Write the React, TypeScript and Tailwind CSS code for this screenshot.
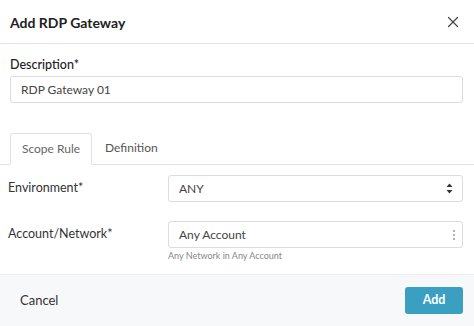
import { X } from 'lucide-react'

export default function App() {
  return (
    <div className="w-[474px] h-[326px] bg-white flex flex-col font-['Lato',sans-serif] text-[#333]">
      {/* Header */}
      <div className="h-[44px] border-b border-[#e5e5e5] flex items-center justify-between pl-[10px] pr-[12px] shrink-0">
        <h2 className="text-[14px] font-bold text-[#222] pt-[1px]">Add RDP Gateway</h2>
        <X size={18} strokeWidth={1.6} className="text-[#444]" />
      </div>

      {/* Body */}
      <div className="flex-1 flex flex-col">
        <div className="pl-[10px] pr-[11px] pt-[13px]">
          <label className="block text-[12.5px] font-medium text-[#222] leading-[15px]">Description*</label>
          <div className="mt-[4px] h-[27px] border border-[#dcdcdc] rounded-[3px] flex items-center px-[10px] text-[12px] text-[#444]">
            RDP Gateway 01
          </div>
        </div>

        {/* Tabs */}
        <div className="mt-[30px] flex items-end border-b border-[#e2e2e2] pl-[10px] h-[32px]">
          <div className="h-[32px] w-[82px] border border-[#e2e2e2] border-b-white -mb-px rounded-t-[3px] bg-white flex items-center justify-center text-[12px] text-[#666]">
            Scope Rule
          </div>
          <div className="h-[32px] px-[13px] flex items-center text-[12px] text-[#555]">Definition</div>
        </div>

        <div className="pl-[8px] pr-[11px] pt-[10px] flex flex-col">
          <div className="flex items-center h-[27px]">
            <span className="w-[160px] text-[12.5px] text-[#333]">Environment*</span>
            <div className="flex-1 h-[27px] border border-[#dcdcdc] rounded-[3px] flex items-center justify-between pl-[10px] pr-[9px] text-[12px] text-[#444]">
              ANY
              <svg width="7" height="11" viewBox="0 0 7 11" className="text-[#333]">
                <path d="M3.5 0.5 L6.5 4 H0.5 Z" fill="currentColor" />
                <path d="M3.5 10.5 L6.5 7 H0.5 Z" fill="currentColor" />
              </svg>
            </div>
          </div>

          <div className="flex items-start mt-[19px]">
            <span className="w-[160px] h-[27px] flex items-center text-[12.5px] text-[#333]">Account/Network*</span>
            <div className="flex-1 flex flex-col">
              <div className="h-[27px] border border-[#dcdcdc] rounded-[3px] flex items-center justify-between pl-[10px] pr-[6px] text-[12px] text-[#444]">
                Any Account
                <svg width="4" height="12" viewBox="0 0 4 12" className="text-[#999]">
                  <circle cx="2" cy="2" r="1" fill="currentColor" />
                  <circle cx="2" cy="6" r="1" fill="currentColor" />
                  <circle cx="2" cy="10" r="1" fill="currentColor" />
                </svg>
              </div>
              <span className="mt-[2px] text-[9px] text-[#888] leading-[12px]">Any Network in Any Account</span>
            </div>
          </div>
        </div>
      </div>

      {/* Footer */}
      <div className="h-[52px] bg-[#f7f8f9] border-t border-[#eceef0] flex items-center justify-between pl-[20px] pr-[11px] shrink-0">
        <button className="text-[13px] text-[#333]">Cancel</button>
        <button className="w-[58px] h-[27px] rounded-[3px] bg-[#3a9fc1] text-white text-[12.5px] font-bold">Add</button>
      </div>
    </div>
  )
}
